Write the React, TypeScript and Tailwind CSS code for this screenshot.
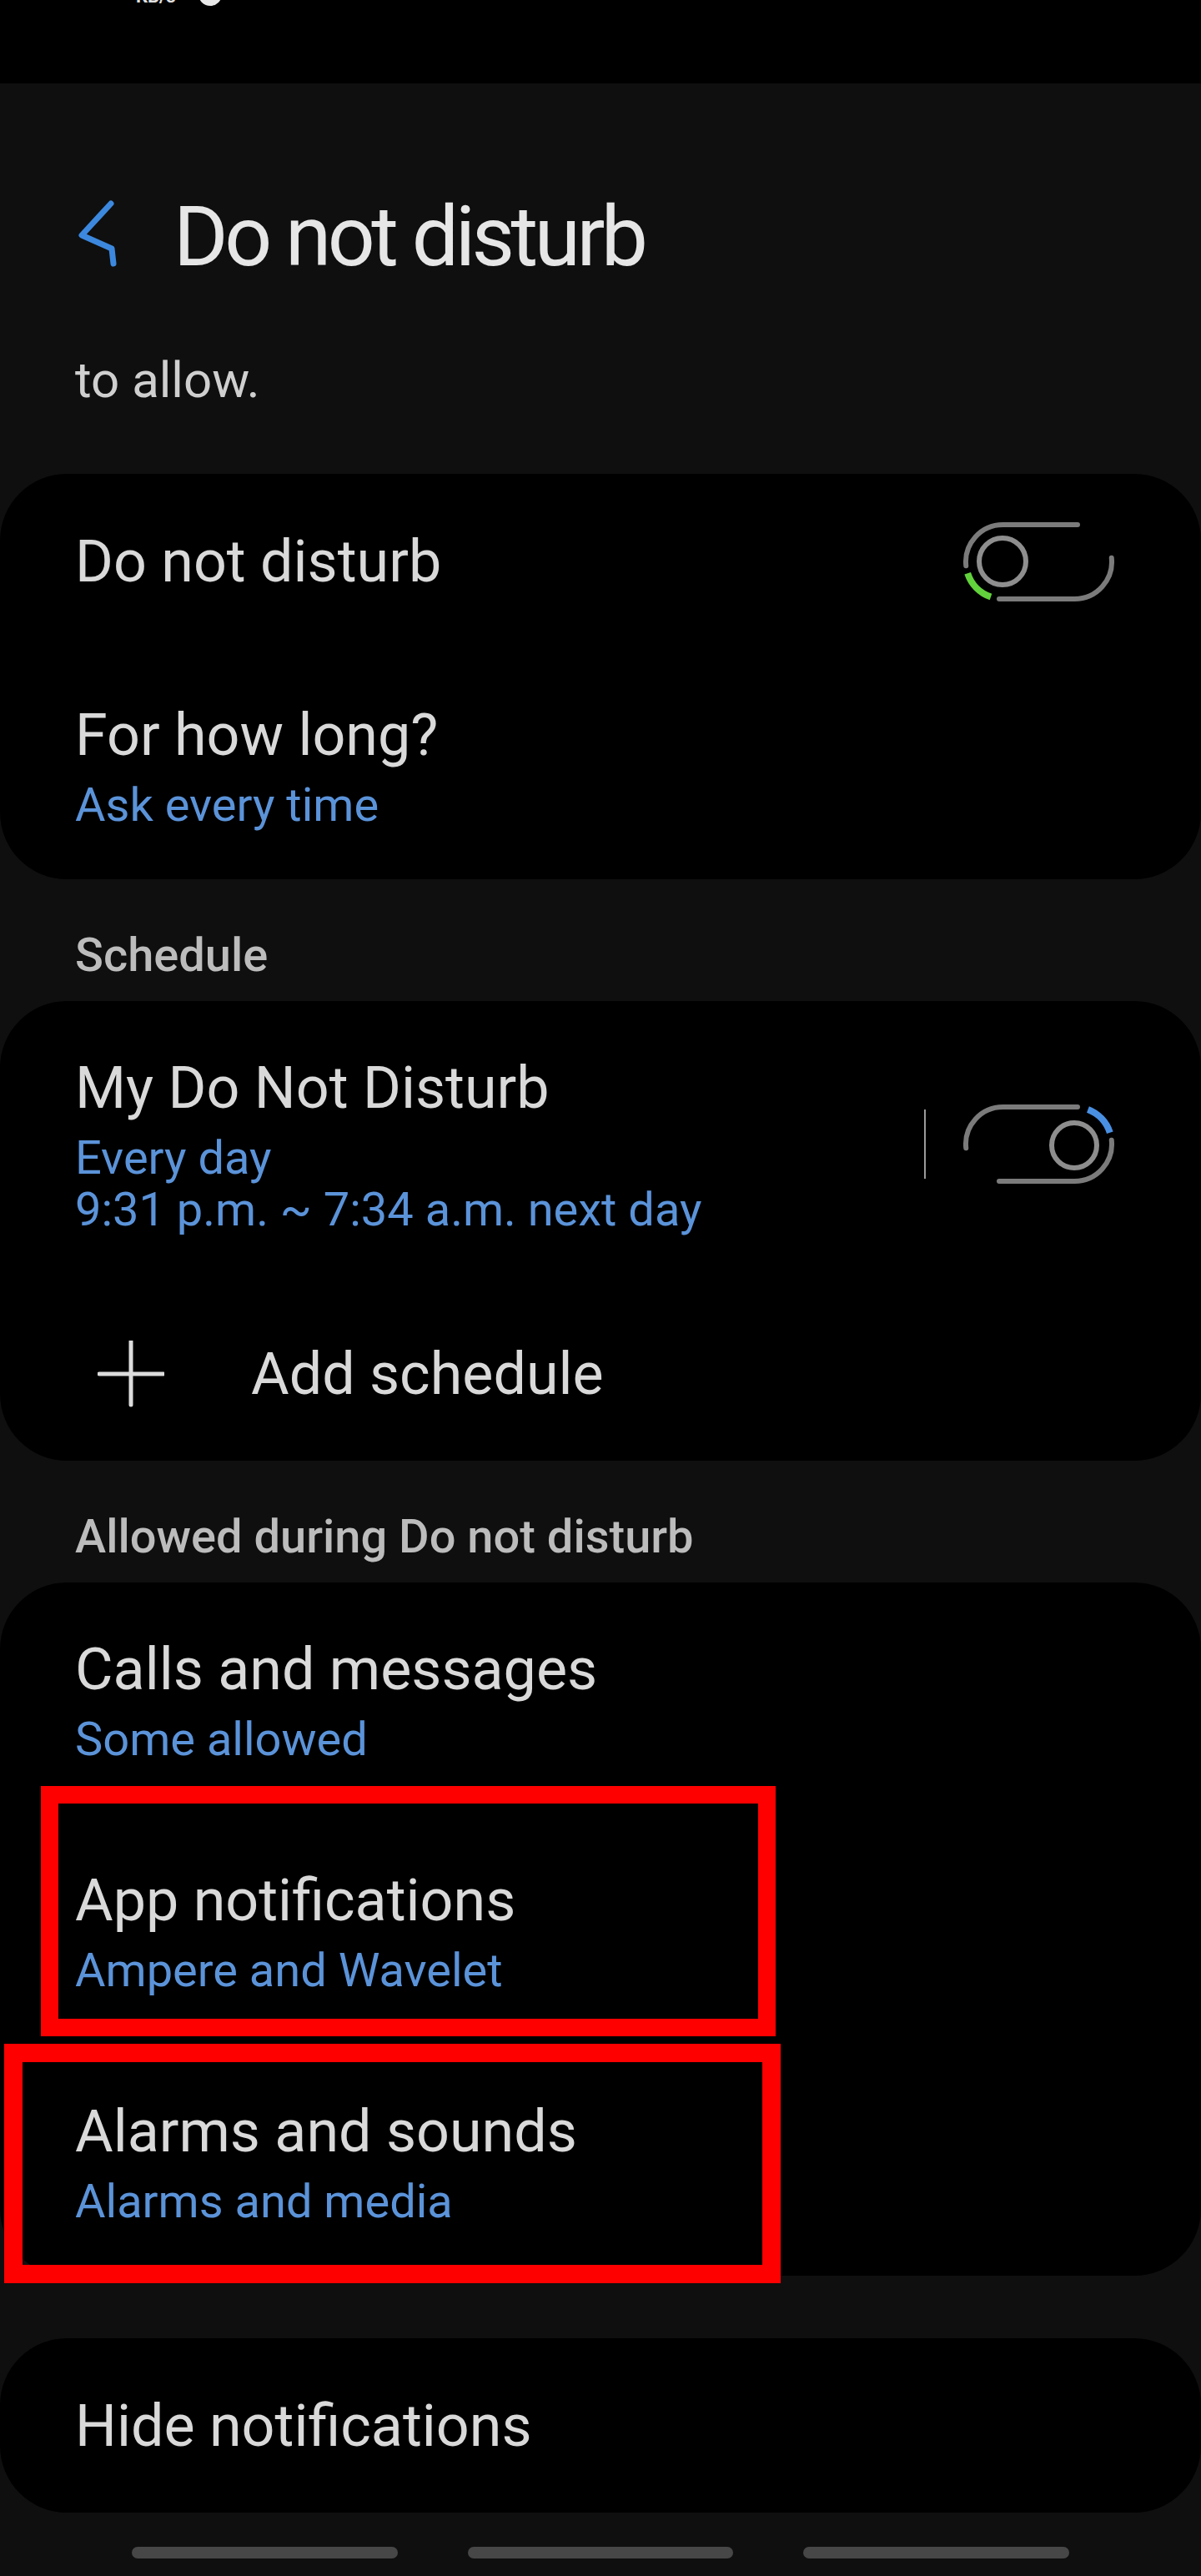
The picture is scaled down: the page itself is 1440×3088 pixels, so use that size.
import React from "react";

const TRACK = "#7b7b7b";
const THUMB = "#8e8e8e";

function Toggle({ on }: { on: boolean }) {
  return (
    <svg width="190" height="100" viewBox="0 0 190 100" fill="none" className="shrink-0">
      {/* track, drawn as two open strokes */}
      <path d="M 8.24 55.15 A 44.5 44.5 0 0 1 52.5 6 L 142 6" stroke={TRACK} strokeWidth="6" strokeLinecap="round" />
      <path d="M 182.76 45.85 A 44.5 44.5 0 0 1 138.5 95 L 48 95" stroke={TRACK} strokeWidth="6" strokeLinecap="round" />
      {on ? (
        <>
          <path d="M 154.45 8.96 A 44.5 44.5 0 0 1 180.82 36.75" stroke="#4a90e2" strokeWidth="8" />
          <circle cx="138" cy="52" r="27" stroke={THUMB} strokeWidth="6" />
        </>
      ) : (
        <>
          <path d="M 10.18 64.25 A 44.5 44.5 0 0 0 38 92.58" stroke="#62d23c" strokeWidth="8" />
          <circle cx="52" cy="50" r="28" stroke={THUMB} strokeWidth="6" />
        </>
      )}
    </svg>
  );
}

function Title({ children }: { children: React.ReactNode }) {
  return <div className="text-[70px] leading-[86px] text-[#d9d9d9] whitespace-nowrap">{children}</div>;
}

function Sub({ children }: { children: React.ReactNode }) {
  return <div className="text-[56px] leading-[62px] text-[#5b93d9] whitespace-nowrap">{children}</div>;
}

function TwoLineRow({ title, sub }: { title: string; sub: string }) {
  return (
    <div className="pt-[61px] pb-[58px] pl-[90px]">
      <Title>{title}</Title>
      <div className="mt-[10px]">
        <Sub>{sub}</Sub>
      </div>
    </div>
  );
}

function SectionHeader({ children }: { children: React.ReactNode }) {
  return (
    <div className="pt-[59px] pb-[23px] pl-[90px] text-[56px] leading-[64px] font-medium text-[#bcbcbc]">
      {children}
    </div>
  );
}

export default function App() {
  return (
    <div className="w-[1440px] h-[3088px] overflow-hidden bg-[#0f0f0f] font-['Roboto','Noto_Sans',sans-serif]">
      {/* status bar, scrolled mostly out of view */}
      <div className="h-[100px] bg-black overflow-hidden">
        <div className="flex items-end h-[7px] pl-[163px]">
          <span className="text-[22px] leading-none font-bold text-[#e0e0e0]">KB/s</span>
          <span className="ml-[27px] w-[28px] h-[28px] rounded-full bg-[#e8e8e8]" />
        </div>
      </div>

      {/* app bar */}
      <div className="mt-[124px] flex items-start h-[120px] pl-[90px]">
        <svg width="60" height="80" viewBox="0 0 60 80" fill="none" className="mt-[16px] shrink-0">
          <path d="M43 4 L8 42 L44 58 L46 76" stroke="#3c88de" strokeWidth="7" strokeLinecap="round" strokeLinejoin="round" />
        </svg>
        <div className="ml-[58px] text-[100px] leading-[120px] tracking-[-0.045em] text-[#e6e6e6] whitespace-nowrap">
          Do not disturb
        </div>
      </div>

      <div className="mt-[76px] pl-[90px] text-[60px] leading-[72px] text-[#cfcfcf]">to allow.</div>

      {/* main switch card */}
      <div className="mt-[76px] bg-black rounded-[80px]">
        <div className="h-[209px] flex items-center justify-between pl-[90px] pr-[100px]">
          <Title>Do not disturb</Title>
          <Toggle on={false} />
        </div>
        <TwoLineRow title="For how long?" sub="Ask every time" />
      </div>

      <SectionHeader>Schedule</SectionHeader>

      {/* schedules card */}
      <div className="bg-black rounded-[80px]">
        <div className="flex items-center justify-between pl-[90px] pr-[100px]">
          <div className="pt-[61px] pb-[61px]">
            <Title>My Do Not Disturb</Title>
            <div className="mt-[10px]">
              <Sub>Every day</Sub>
              <Sub>9:31 p.m. ~ 7:34 a.m. next day</Sub>
            </div>
          </div>
          <div className="flex items-center">
            <div className="w-[2px] h-[83px] bg-[#9a9a9a]" />
            <div className="ml-[40px]">
              <Toggle on={true} />
            </div>
          </div>
        </div>
        <div className="h-[209px] flex items-center pl-[117px]">
          <svg width="80" height="80" viewBox="0 0 80 80" fill="none" className="shrink-0">
            <path d="M40 1 L40 77 M2 40 L79 40" stroke="#dcdcdc" strokeWidth="5" strokeLinecap="round" />
          </svg>
          <div className="ml-[104px] text-[70px] leading-[86px] text-[#d9d9d9]">Add schedule</div>
        </div>
      </div>

      <SectionHeader>Allowed during Do not disturb</SectionHeader>

      {/* exceptions card */}
      <div className="relative bg-black rounded-[80px]">
        <TwoLineRow title="Calls and messages" sub="Some allowed" />
        <TwoLineRow title="App notifications" sub="Ampere and Wavelet" />
        <TwoLineRow title="Alarms and sounds" sub="Alarms and media" />
        <div className="absolute left-[49px] top-[244px] w-[881px] h-[300px] border-[21px] border-[#ff0000]" />
        <div className="absolute left-[5px] top-[553px] w-[931px] h-[287px] border-[22px] border-[#ff0000]" />
      </div>

      <div className="mt-[75px] h-[209px] bg-black rounded-[80px] flex items-center pl-[90px]">
        <Title>Hide notifications</Title>
      </div>

      {/* navigation bar */}
      <div className="mt-[41px] flex pl-[158px] gap-[84px]">
        <div className="w-[319px] h-[14px] rounded-full bg-[#474747]" />
        <div className="w-[318px] h-[14px] rounded-full bg-[#474747]" />
        <div className="w-[319px] h-[14px] rounded-full bg-[#474747]" />
      </div>
    </div>
  );
}
